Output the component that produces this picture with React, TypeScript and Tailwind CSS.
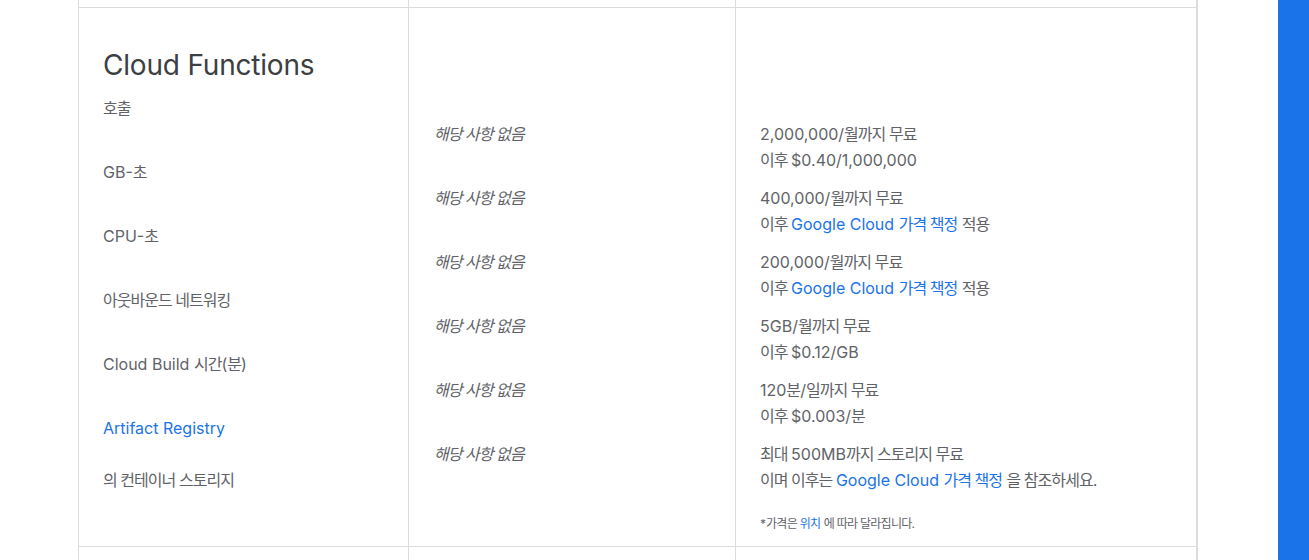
import React from "react";

const font = "font-['Inter','Noto_Sans_CJK_KR',sans-serif]";

// Hangul runs come out a bit wide in Noto CJK, tighten them up
function K({ s }: { s: string }) {
  return (
    <>
      {s.split(/([\uAC00-\uD7A3][\uAC00-\uD7A3 ]*)/).map((part, i) =>
        /[\uAC00-\uD7A3]/.test(part) ? (
          <span key={i} className="tracking-[-0.06em]">
            {part}
          </span>
        ) : (
          part
        ),
      )}
    </>
  );
}

const labels = ["호출", "GB-초", "CPU-초", "아웃바운드 네트워킹", "Cloud Build 시간(분)"];

function PricingLink({ children }: { children: string }) {
  return (
    <a href="#" className="text-[#1a73e8]">
      <K s={children} />
    </a>
  );
}

const freeTier: { first: React.ReactNode; second: React.ReactNode }[] = [
  { first: <K s="2,000,000/월까지 무료" />, second: <K s="이후 $0.40/1,000,000" /> },
  {
    first: <K s="400,000/월까지 무료" />,
    second: (
      <>
        <K s="이후 " />
        <PricingLink>Google Cloud 가격 책정</PricingLink>
        <K s=" 적용" />
      </>
    ),
  },
  {
    first: <K s="200,000/월까지 무료" />,
    second: (
      <>
        <K s="이후 " />
        <PricingLink>Google Cloud 가격 책정</PricingLink>
        <K s=" 적용" />
      </>
    ),
  },
  { first: <K s="5GB/월까지 무료" />, second: <K s="이후 $0.12/GB" /> },
  { first: <K s="120분/일까지 무료" />, second: <K s="이후 $0.003/분" /> },
  {
    first: <K s="최대 500MB까지 스토리지 무료" />,
    second: (
      <>
        <K s="이며 이후는 " />
        <PricingLink>Google Cloud 가격 책정</PricingLink>
        <K s=" 을 참조하세요." />
      </>
    ),
  },
];

function EdgeRow({ className }: { className: string }) {
  return (
    <div className={`flex ${className}`}>
      <div className="w-[331px] border-x border-[#dadce0]" />
      <div className="w-[327px] border-r border-[#dadce0]" />
      <div className="flex-1 border-r-2 border-[#dadce0]" />
    </div>
  );
}

export default function App() {
  return (
    <div className={`flex h-[560px] overflow-hidden bg-white pl-[78px] ${font}`}>
      <div className="flex w-[1120px] flex-col">
        <EdgeRow className="h-[7px]" />

        <div className="flex border-y border-[#dadce0] text-[16px] leading-[26px] text-[#5f6368]">
          <div className="flex w-[331px] flex-col border-x border-[#dadce0] pt-[39px] pl-[24px]">
            <h2 className="text-[28px] leading-[36px] tracking-[-0.2px] text-[#3c4043]">Cloud Functions</h2>
            <ul className="mt-[12px] flex flex-col gap-[38px]">
              {labels.map((l) => (
                <li key={l}>
                  <K s={l} />
                </li>
              ))}
              <li>
                <PricingLink>Artifact Registry</PricingLink>
                <div className="mt-[26px]">
                  <K s="의 컨테이너 스토리지" />
                </div>
              </li>
            </ul>
          </div>

          <div className="flex w-[327px] flex-col gap-[38px] border-r border-[#dadce0] pt-[113px] pl-[25px] italic">
            {freeTier.map((_, i) => (
              <div key={i}>
                <K s="해당 사항 없음" />
              </div>
            ))}
          </div>

          <div className="flex flex-1 flex-col border-r-2 border-[#dadce0] pt-[113px] pb-[13px] pl-[24px]">
            <div className="flex flex-col gap-[12px]">
              {freeTier.map((t, i) => (
                <div key={i}>
                  <div>{t.first}</div>
                  <div>{t.second}</div>
                </div>
              ))}
            </div>
            <p className="mt-[22px] text-[12px] leading-[18px]">
              <K s="*가격은 " />
              <PricingLink>위치</PricingLink>
              <K s=" 에 따라 달라집니다." />
            </p>
          </div>
        </div>

        <EdgeRow className="flex-1" />
      </div>

      <div className="ml-auto w-[31px] bg-[#1a73e8]" />
    </div>
  );
}
